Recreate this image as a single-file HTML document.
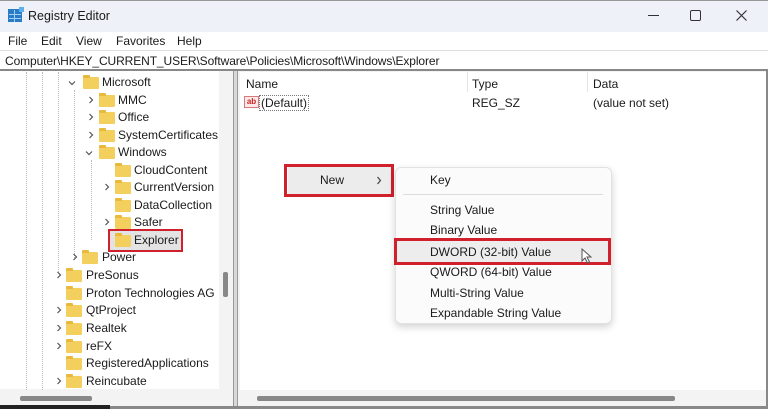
<!DOCTYPE html>
<html><head><meta charset="utf-8"><style>
*{margin:0;padding:0;box-sizing:border-box}
body{width:768px;height:409px;overflow:hidden;background:#fff;font-family:"Liberation Sans",sans-serif;font-size:12px;color:#1a1a1a;position:relative}
.a{position:absolute;white-space:nowrap}
.fold{position:absolute;width:16px;height:12px;background:#f3cf5e;border-radius:1px}
.fold:before{content:"";position:absolute;left:0;top:-2px;width:7px;height:3px;background:#e8b93c;border-radius:1px 1px 0 0}
.chev{position:absolute;width:8px;height:8px}
.red{position:absolute;border:3px solid #d0202c}
.mi{position:absolute;left:430px;font-size:12px}
</style></head><body>
<!-- title bar -->
<div class="a" style="left:0;top:0;width:768px;height:32px;background:#eef2f8;border-top:1px solid #999"></div>
<div class="a" style="left:8px;top:9px;width:14px;height:13px;background:#2a7cc7"></div>
<div class="a" style="left:9px;top:14px;width:12px;height:1px;background:#9fd0f5"></div>
<div class="a" style="left:9px;top:18px;width:12px;height:1px;background:#9fd0f5"></div>
<div class="a" style="left:14px;top:10px;width:1px;height:12px;background:#9fd0f5"></div>
<div class="a" style="left:19px;top:7px;width:5px;height:5px;background:#5fb0ea"></div>
<div class="a" style="left:28px;top:9px;font-size:12.5px">Registry Editor</div>
<div class="a" style="left:648px;top:15px;width:11px;height:1px;background:#333"></div>
<div class="a" style="left:690px;top:10px;width:11px;height:11px;border:1px solid #333;border-radius:2px"></div>
<svg class="a" style="left:736px;top:10px" width="11" height="11"><path d="M0.5 0.5L10.5 10.5M10.5 0.5L0.5 10.5" stroke="#333" stroke-width="1.2"/></svg>
<!-- menu -->
<div class="a" style="left:0;top:32px;width:768px;height:19px;background:#fff"></div>
<div class="a" style="left:8px;top:34px">File</div>
<div class="a" style="left:41px;top:34px">Edit</div>
<div class="a" style="left:76px;top:34px">View</div>
<div class="a" style="left:116px;top:34px">Favorites</div>
<div class="a" style="left:177px;top:34px">Help</div>
<!-- address -->
<div class="a" style="left:0;top:50px;width:768px;height:21px;border-top:1px solid #ddd;border-bottom:2px solid #888;background:#fff"></div>
<div class="a" style="left:5px;top:54px;font-size:12px;letter-spacing:-.1px">Computer\HKEY_CURRENT_USER\Software\Policies\Microsoft\Windows\Explorer</div>
<!-- panes -->
<div class="a" style="left:0;top:71px;width:768px;height:338px;background:#f3f3f3"></div>
<div class="a" style="left:0;top:71px;width:219px;height:318px;background:#fff"></div>
<div class="a" style="left:233px;top:71px;width:5px;height:338px;background:#d8d8d8;border-left:1px solid #999;border-right:1px solid #999"></div>
<div class="a" style="left:240px;top:72px;width:526px;height:318px;background:#fff"></div>
<div class="a" style="left:766px;top:71px;width:2px;height:338px;background:#888"></div>
<div class="a" style="left:0;top:405px;width:110px;height:4px;background:#222"></div>
<div class="a" style="left:110px;top:406px;width:658px;height:3px;background:#888"></div>
<!-- scrollbars -->
<div class="a" style="left:223px;top:272px;width:5px;height:25px;background:#888;border-radius:2px"></div>
<div class="a" style="left:20px;top:396px;width:72px;height:5px;background:#888;border-radius:2px"></div>
<div class="a" style="left:257px;top:396px;width:418px;height:5px;background:#888;border-radius:2px"></div>
<!-- dotted lines -->
<div class="a" style="left:26px;top:72px;height:318px;border-left:1px dotted #bbb"></div>
<div class="a" style="left:42px;top:72px;height:318px;border-left:1px dotted #bbb"></div>
<div class="a" style="left:58px;top:72px;height:200px;border-left:1px dotted #bbb"></div>
<div class="a" style="left:74px;top:90px;height:168px;border-left:1px dotted #bbb"></div>
<div class="a" style="left:91px;top:160px;height:80px;border-left:1px dotted #bbb"></div>
<!-- tree -->
<svg class="chev" style="left:68px;top:79px"><path d="M1 2.5L4 5.5L7 2.5" stroke="#555" fill="none" stroke-width="1.2"/></svg><div class="fold" style="left:83px;top:77px"></div><div class="a" style="left:102px;top:75px">Microsoft</div>
<svg class="chev" style="left:87px;top:96px"><path d="M2.5 1L5.5 4L2.5 7" stroke="#555" fill="none" stroke-width="1.2"/></svg><div class="fold" style="left:99px;top:95px"></div><div class="a" style="left:118px;top:93px">MMC</div>
<svg class="chev" style="left:87px;top:113px"><path d="M2.5 1L5.5 4L2.5 7" stroke="#555" fill="none" stroke-width="1.2"/></svg><div class="fold" style="left:99px;top:112px"></div><div class="a" style="left:118px;top:110px">Office</div>
<svg class="chev" style="left:87px;top:131px"><path d="M2.5 1L5.5 4L2.5 7" stroke="#555" fill="none" stroke-width="1.2"/></svg><div class="fold" style="left:99px;top:130px"></div><div class="a" style="left:118px;top:128px">SystemCertificates</div>
<svg class="chev" style="left:85px;top:149px"><path d="M1 2.5L4 5.5L7 2.5" stroke="#555" fill="none" stroke-width="1.2"/></svg><div class="fold" style="left:99px;top:147px"></div><div class="a" style="left:118px;top:145px">Windows</div>
<div class="fold" style="left:115px;top:165px"></div><div class="a" style="left:134px;top:163px">CloudContent</div>
<svg class="chev" style="left:103px;top:183px"><path d="M2.5 1L5.5 4L2.5 7" stroke="#555" fill="none" stroke-width="1.2"/></svg><div class="fold" style="left:115px;top:182px"></div><div class="a" style="left:134px;top:180px">CurrentVersion</div>
<div class="fold" style="left:115px;top:200px"></div><div class="a" style="left:134px;top:198px">DataCollection</div>
<svg class="chev" style="left:103px;top:218px"><path d="M2.5 1L5.5 4L2.5 7" stroke="#555" fill="none" stroke-width="1.2"/></svg><div class="fold" style="left:115px;top:217px"></div><div class="a" style="left:134px;top:215px">Safer</div>
<div class="a" style="left:109px;top:230px;width:73px;height:20px;background:#e3e3e3"></div>
<div class="fold" style="left:115px;top:235px"></div><div class="a" style="left:134px;top:233px">Explorer</div>
<div class="red" style="left:108px;top:229px;width:75px;height:23px;border-width:2px"></div>
<svg class="chev" style="left:71px;top:253px"><path d="M2.5 1L5.5 4L2.5 7" stroke="#555" fill="none" stroke-width="1.2"/></svg><div class="fold" style="left:82px;top:252px"></div><div class="a" style="left:102px;top:250px">Power</div>
<svg class="chev" style="left:55px;top:271px"><path d="M2.5 1L5.5 4L2.5 7" stroke="#555" fill="none" stroke-width="1.2"/></svg><div class="fold" style="left:66px;top:270px"></div><div class="a" style="left:86px;top:268px">PreSonus</div>
<div class="fold" style="left:66px;top:288px"></div><div class="a" style="left:86px;top:286px">Proton Technologies AG</div>
<svg class="chev" style="left:55px;top:306px"><path d="M2.5 1L5.5 4L2.5 7" stroke="#555" fill="none" stroke-width="1.2"/></svg><div class="fold" style="left:66px;top:305px"></div><div class="a" style="left:86px;top:303px">QtProject</div>
<svg class="chev" style="left:55px;top:324px"><path d="M2.5 1L5.5 4L2.5 7" stroke="#555" fill="none" stroke-width="1.2"/></svg><div class="fold" style="left:66px;top:323px"></div><div class="a" style="left:86px;top:321px">Realtek</div>
<svg class="chev" style="left:55px;top:342px"><path d="M2.5 1L5.5 4L2.5 7" stroke="#555" fill="none" stroke-width="1.2"/></svg><div class="fold" style="left:66px;top:341px"></div><div class="a" style="left:86px;top:339px">reFX</div>
<div class="fold" style="left:66px;top:358px"></div><div class="a" style="left:86px;top:356px">RegisteredApplications</div>
<svg class="chev" style="left:55px;top:377px"><path d="M2.5 1L5.5 4L2.5 7" stroke="#555" fill="none" stroke-width="1.2"/></svg><div class="fold" style="left:66px;top:376px"></div><div class="a" style="left:86px;top:374px">Reincubate</div>
<!-- right list -->
<div class="a" style="left:467px;top:72px;height:20px;border-left:1px solid #e5e5e5"></div>
<div class="a" style="left:587px;top:72px;height:20px;border-left:1px solid #e5e5e5"></div>
<div class="a" style="left:246px;top:77px">Name</div>
<div class="a" style="left:472px;top:77px">Type</div>
<div class="a" style="left:593px;top:77px">Data</div>
<div class="a" style="left:244px;top:96px;width:15px;height:12px;background:#fbeaea;border:1px solid #d77;font-size:8px;color:#c22;font-weight:bold;line-height:10px;text-align:center">ab</div>
<div class="a" style="left:259px;top:95px;padding:0 1px;border:1px dotted #777">(Default)</div>
<div class="a" style="left:472px;top:96px">REG_SZ</div>
<div class="a" style="left:593px;top:96px">(value not set)</div>
<!-- context menu -->
<div class="a" style="left:288px;top:167px;width:103px;height:27px;background:#ececec"></div>
<div class="a" style="left:320px;top:173px">New</div>
<svg class="a" style="left:375px;top:176px" width="8" height="9"><path d="M2.5 1L5.5 4.5L2.5 8" stroke="#444" fill="none" stroke-width="1.2"/></svg>
<div class="red" style="left:284px;top:164px;width:110px;height:33px"></div>
<div class="a" style="left:395px;top:167px;width:217px;height:157px;background:#fbfbfb;border:1px solid #e2e2e2;border-radius:6px;box-shadow:0 3px 8px rgba(0,0,0,.18)"></div>
<div class="mi" style="top:173px">Key</div>
<div class="a" style="left:403px;top:194px;width:200px;height:1px;background:#dcdcdc"></div>
<div class="mi" style="top:203px">String Value</div>
<div class="mi" style="top:223px">Binary Value</div>
<div class="a" style="left:397px;top:240px;width:212px;height:22px;background:#ededed"></div>
<div class="mi" style="top:245px">DWORD (32-bit) Value</div>
<div class="red" style="left:394px;top:238px;width:217px;height:27px"></div>
<svg class="a" style="left:581px;top:248px" width="12" height="16"><path d="M1 1L1 13L4 10L6.5 15L8.5 14L6 9L10 9Z" fill="#fff" stroke="#555" stroke-width="1"/></svg>
<div class="mi" style="top:265px">QWORD (64-bit) Value</div>
<div class="mi" style="top:286px">Multi-String Value</div>
<div class="mi" style="top:306px">Expandable String Value</div>
</body></html>
